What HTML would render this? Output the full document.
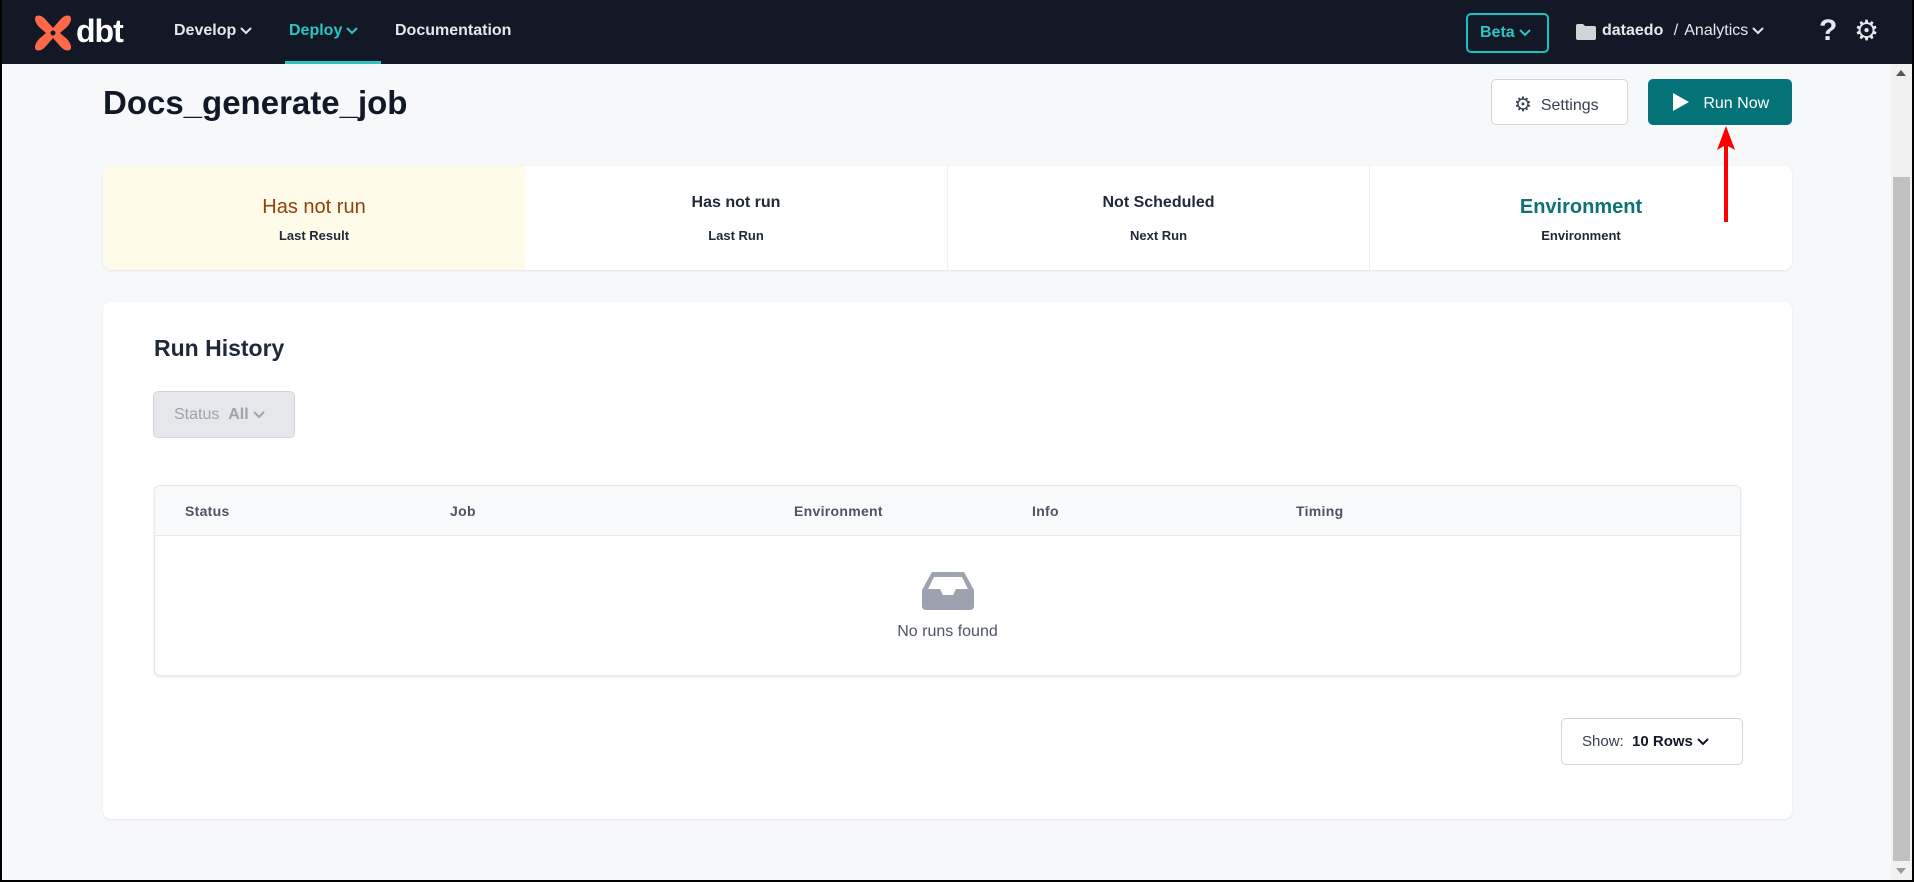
<!DOCTYPE html>
<html><head><style>
*{box-sizing:border-box;margin:0;padding:0}
body{width:1914px;height:882px;overflow:hidden;background:#000;font-family:"Liberation Sans",sans-serif;position:relative}
.frame{position:absolute;left:2px;top:0;width:1910px;height:880px;background:#f7f8fa;overflow:hidden}
.nav{position:absolute;left:0;top:0;width:1910px;height:64px;background:#121826}
.abs{position:absolute}
.nl{position:absolute;top:22px;font-size:16px;font-weight:bold;color:#e5e7eb}
.card{position:absolute;background:#fff;border-radius:8px;box-shadow:0 1px 2px rgba(0,0,0,.08)}
.cell{position:absolute;top:0;width:422px;height:104px;text-align:center}
.big{position:absolute;width:100%;top:30px;font-size:20px}
.sm{position:absolute;width:100%;top:62px;font-size:13px;font-weight:bold;color:#1f2937}
.th{position:absolute;top:17px;font-size:14px;font-weight:bold;color:#4b5563;letter-spacing:.3px}
.cv{display:inline-block;vertical-align:middle;margin-left:4px}
</style></head><body>
<div class="frame">
<div class="nav">
 <svg class="abs" style="left:30px;top:14px" width="42" height="38" viewBox="0 0 42 38"><path d="M4 2 Q9 0 14 6 L21 14 L28 6 Q33 0 38 2 Q41 6 35 13 L28 19 L35 25 Q41 32 38 36 Q33 38 28 32 L21 24 L14 32 Q9 38 4 36 Q1 32 7 25 L14 19 L7 13 Q1 6 4 2Z" fill="#ff694a"/><circle cx="21" cy="19" r="2.5" fill="#121826"/></svg>
 <div class="abs" style="left:74px;top:13px;font-size:32px;font-weight:bold;color:#fff;letter-spacing:-1px">dbt</div>
 <div class="nl" style="left:172px">Develop<svg class="cv" width="12" height="8" viewBox="0 0 12 8"><path d="M1 1 L6 6 L11 1" stroke="#e5e7eb" stroke-width="2" fill="none"/></svg></div>
 <div class="nl" style="left:287px;color:#2ec4c4">Deploy<svg class="cv" width="12" height="8" viewBox="0 0 12 8"><path d="M1 1 L6 6 L11 1" stroke="#2ec4c4" stroke-width="2" fill="none"/></svg></div>
 <div class="abs" style="left:283px;top:61px;width:96px;height:3px;background:#2ec4c4"></div>
 <div class="nl" style="left:393px">Documentation</div>
 <div class="abs" style="left:1464px;top:13px;width:83px;height:40px;border:2px solid #19c2c2;border-radius:5px;color:#2ec4c4;font-weight:bold;font-size:16px;padding:9px 0 0 12px">Beta<svg class="cv" width="12" height="8" viewBox="0 0 12 8"><path d="M1 1 L6 6 L11 1" stroke="#2ec4c4" stroke-width="2" fill="none"/></svg></div>
 <svg class="abs" style="left:1574px;top:24px" width="20" height="16" viewBox="0 0 20 16"><path d="M0 2 Q0 0 2 0 H7 L9 2 H18 Q20 2 20 4 V14 Q20 16 18 16 H2 Q0 16 0 14Z" fill="#d1d5db"/></svg>
 <div class="nl" style="left:1600px;color:#e5e7eb">dataedo <span style="font-weight:normal;margin:0 6px">/</span><span style="font-weight:normal">Analytics</span><svg class="cv" width="12" height="8" viewBox="0 0 12 8"><path d="M1 1 L6 6 L11 1" stroke="#e5e7eb" stroke-width="2" fill="none"/></svg></div>
 <div class="abs" style="left:1817px;top:14px;font-size:30px;font-weight:bold;color:#e5e7eb">?</div>
 <div class="abs" style="left:1852px;top:14px;font-size:28px;color:#e5e7eb">&#9881;</div>
</div>
<div class="abs" style="left:101px;top:84px;font-size:33px;font-weight:bold;color:#111827">Docs_generate_job</div>
<div class="abs" style="left:1489px;top:79px;width:137px;height:46px;background:#fff;border:1px solid #d1d5db;border-radius:5px;font-size:16px;color:#374151;padding:11px 0 0 22px"><span style="font-size:20px;position:relative;top:1px;color:#374151">&#9881;</span>&nbsp; Settings</div>
<div class="abs" style="left:1646px;top:79px;width:144px;height:46px;background:#047377;border-radius:5px;font-size:16px;color:#fff;padding:13px 0 0 24px"><svg width="18" height="20" viewBox="0 0 18 20" style="vertical-align:-4px"><path d="M1 1 L17 10 L1 19Z" fill="#fff"/></svg>&nbsp;&nbsp; Run Now</div>
<div class="card" style="left:101px;top:166px;width:1689px;height:104px;overflow:hidden">
 <div class="cell" style="left:0;background:#fefbe9"><div class="big" style="color:#92400e">Has not run</div><div class="sm">Last Result</div></div>
 <div class="cell" style="left:422px"><div class="big" style="font-size:16px;top:28px;font-weight:bold;color:#1f2937">Has not run</div><div class="sm">Last Run</div></div>
 <div class="cell" style="left:844px;border-left:1px solid #eef0f3"><div class="big" style="font-size:16px;top:28px;font-weight:bold;color:#1f2937">Not Scheduled</div><div class="sm">Next Run</div></div>
 <div class="cell" style="left:1266px;border-left:1px solid #eef0f3;width:423px"><div class="big" style="color:#0e7275;font-weight:bold">Environment</div><div class="sm">Environment</div></div>
</div>
<svg class="abs" style="left:1714px;top:126px;z-index:5" width="20" height="98" viewBox="0 0 20 98"><path d="M10 0 L19 24 L12 20 V96 H8 V20 L1 24Z" fill="#f00"/></svg>
<div class="card" style="left:101px;top:302px;width:1689px;height:517px">
 <div class="abs" style="left:51px;top:33px;font-size:23px;font-weight:bold;color:#1f2937">Run History</div>
 <div class="abs" style="left:50px;top:89px;width:142px;height:47px;background:#e5e7eb;border:1px solid #d1d5db;border-radius:5px;font-size:16px;color:#9ca3af;padding:14px 0 0 20px">Status&nbsp; <b>All</b><svg class="cv" width="12" height="8" viewBox="0 0 12 8"><path d="M1 1 L6 6 L11 1" stroke="#9ca3af" stroke-width="2" fill="none"/></svg></div>
 <div class="abs" style="left:51px;top:183px;width:1587px;height:191px;border:1px solid #e5e7eb;border-radius:6px;overflow:hidden;box-shadow:0 1px 2px rgba(0,0,0,.1)">
  <div class="abs" style="left:0;top:0;width:100%;height:50px;background:#f9fafb;border-bottom:1px solid #e5e7eb"></div>
  <div class="th" style="left:30px">Status</div><div class="th" style="left:295px">Job</div><div class="th" style="left:639px">Environment</div><div class="th" style="left:877px">Info</div><div class="th" style="left:1141px">Timing</div>
  <svg class="abs" style="left:767px;top:86px" width="52" height="38" viewBox="0 0 52 38"><path d="M10 0 H42 L52 18 V34 Q52 38 48 38 H4 Q0 38 0 34 V18Z" fill="#9ca3af"/><path d="M12 5 H40 L46 17 H34 L31 23 H21 L18 17 H6Z" fill="#fff"/></svg>
  <div class="abs" style="left:0;width:100%;top:137px;text-align:center;font-size:16px;color:#4b5563">No runs found</div>
 </div>
 <div class="abs" style="left:1458px;top:416px;width:182px;height:47px;border:1px solid #d1d5db;border-radius:5px;font-size:15px;color:#374151;padding:14px 0 0 20px">Show:&nbsp; <b style="color:#111827">10 Rows</b><svg class="cv" width="12" height="8" viewBox="0 0 12 8"><path d="M1 1 L6 6 L11 1" stroke="#111827" stroke-width="2" fill="none"/></svg></div>
</div>
<div class="abs" style="left:1889px;top:64px;width:21px;height:816px;background:#f1f1f1"></div>
<div class="abs" style="left:1891px;top:177px;width:17px;height:684px;background:#c1c1c1"></div>
<div class="abs" style="left:1894px;top:70px;width:0;height:0;border-left:5px solid transparent;border-right:5px solid transparent;border-bottom:6px solid #555"></div>
<div class="abs" style="left:1894px;top:868px;width:0;height:0;border-left:5px solid transparent;border-right:5px solid transparent;border-top:6px solid #999"></div>
</div>
</body></html>
